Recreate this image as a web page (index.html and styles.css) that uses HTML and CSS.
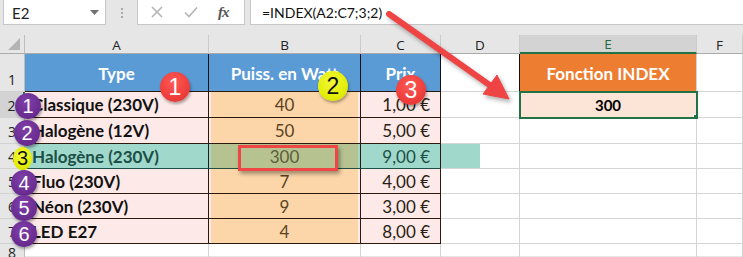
FILE: index.html
```html
<!DOCTYPE html>
<html lang="fr">
<head>
<meta charset="utf-8">
<title>Fonction INDEX</title>
<link rel="stylesheet" href="styles.css">
</head>
<body>
<div class="app">
  <div class="toolbar">
    <div class="namebox"><span>E2</span><svg class="caret" width="9" height="5" viewBox="0 0 9 5"><path d="M0 0h9L4.5 5z"/></svg></div>
    <div class="grip"><i></i><i></i><i></i></div>
    <div class="fxbox">
      <svg class="ico" width="14" height="14" viewBox="0 0 14 14"><path d="M2 2l10 10M12 2L2 12"/></svg>
      <svg class="ico" width="16" height="14" viewBox="0 0 16 14"><path d="M2 7.5l4 4L14 2.5"/></svg>
      <span class="fx">fx</span>
    </div>
    <div class="formula">=INDEX(A2:C7;3;2)</div>
  </div>

  <div class="sheet">
    <div class="corner"><svg width="13" height="13" viewBox="0 0 13 13"><path d="M12 0v12H0z"/></svg></div>
    <div class="ch">A</div><div class="ch">B</div><div class="ch">C</div><div class="ch">D</div><div class="ch sel">E</div><div class="ch">F</div>

    <div class="rh">1</div>
    <div class="c hd">Type</div><div class="c hd">Puiss. en Watt</div><div class="c hd">Prix</div>
    <div class="c d1"></div><div class="c hd-or">Fonction INDEX</div><div class="c"></div>

    <div class="rh rsel">2</div>
    <div class="c ta">Classique (230V)</div><div class="c tb">40</div><div class="c tc">1,00 €</div>
    <div class="c"></div><div class="c res">300</div><div class="c"></div>

    <div class="rh">3</div>
    <div class="c ta">Halogène (12V)</div><div class="c tb">50</div><div class="c tc">5,00 €</div>
    <div class="c"></div><div class="c"></div><div class="c"></div>

    <div class="rh">4</div>
    <div class="c ta hl">Halogène (230V)</div><div class="c tb hlb">300</div><div class="c tc hl">9,00 €</div>
    <div class="c hld"></div><div class="c"></div><div class="c"></div>

    <div class="rh">5</div>
    <div class="c ta">Fluo (230V)</div><div class="c tb">7</div><div class="c tc">4,00 €</div>
    <div class="c"></div><div class="c"></div><div class="c"></div>

    <div class="rh">6</div>
    <div class="c ta">Néon (230V)</div><div class="c tb">9</div><div class="c tc">3,00 €</div>
    <div class="c"></div><div class="c"></div><div class="c"></div>

    <div class="rh">7</div>
    <div class="c ta">LED E27</div><div class="c tb">4</div><div class="c tc">8,00 €</div>
    <div class="c"></div><div class="c"></div><div class="c"></div>

    <div class="rh">8</div>
    <div class="c"></div><div class="c"></div><div class="c"></div>
    <div class="c"></div><div class="c"></div><div class="c"></div>
  </div>

  <div class="redbox"></div>

  <svg class="arrow" width="743" height="257" viewBox="0 0 743 257">
    <line x1="389" y1="14" x2="491" y2="86" />
    <polygon points="483,94 497,75 509,99" />
  </svg>

  <div class="badge red b-r1">1</div>
  <div class="badge yellow b-y2">2</div>
  <div class="badge red b-r3">3</div>

  <div class="badge purple b-p1">1</div>
  <div class="badge purple b-p2">2</div>
  <div class="badge yellow b-y3">3</div>
  <div class="badge purple b-p4">4</div>
  <div class="badge purple b-p5">5</div>
  <div class="badge purple b-p6">6</div>
</div>
</body>
</html>
```

FILE: styles.css
```css
* { box-sizing: border-box; }
html, body { margin: 0; padding: 0; }
body {
  width: 743px;
  height: 257px;
  overflow: hidden;
  background: #e6e6e6;
  font-family: Lato, "Open Sans", sans-serif;
}
.app {
  position: relative;
  width: 743px;
  height: 257px;
  overflow: hidden;
}

/* ---------- formula bar ---------- */
.toolbar {
  display: flex;
  height: 26px;
  margin-top: -1px;
  padding-left: 3px;
}
.namebox {
  width: 103px;
  background: #fff;
  border: 1px solid #c6c6c6;
  display: flex;
  align-items: center;
  justify-content: space-between;
  padding: 1px 6px 0 8px;
  font-family: Lato, sans-serif;
  font-size: 15px;
  color: #222;
}
.caret path { fill: #707070; }
.grip {
  width: 31px;
  display: flex;
  flex-direction: column;
  align-items: center;
  justify-content: center;
  gap: 2px;
  padding-top: 1px;
}
.grip i {
  display: block;
  width: 2px;
  height: 2px;
  background: #a8a8a8;
}
.fxbox {
  width: 108px;
  background: #fff;
  border: 1px solid #c6c6c6;
  display: flex;
  align-items: center;
  padding-left: 12px;
  gap: 19px;
}
.ico path {
  fill: none;
  stroke: #b5b5b5;
  stroke-width: 1.6;
}
.fx {
  font-family: "Liberation Serif", serif;
  font-style: italic;
  font-weight: bold;
  font-size: 15px;
  color: #555;
  letter-spacing: -1px;
}
.formula {
  flex: 1;
  margin-left: 5px;
  background: #fff;
  border: 1px solid #c6c6c6;
  border-right: none;
  display: flex;
  align-items: center;
  padding: 1px 0 0 11px;
  font-family: Lato, sans-serif;
  font-size: 14px;
  color: #111;
}

/* ---------- grid ---------- */
.sheet {
  margin-top: 10px;
  display: grid;
  grid-template-columns: 25px 184px 152px 80px 79px 177px 1fr;
  grid-template-rows: 19px 38px 26px 26px 25px 25px 25px 25px 1fr;
  height: 221px;
  background: #fff;
}
.corner {
  background: #e6e6e6;
  border-right: 1px solid #bdbdbd;
  border-bottom: 1px solid #ababab;
  display: flex;
  align-items: flex-end;
  justify-content: flex-end;
  padding: 0 3px 2px 0;
}
.corner path { fill: #b4b4b4; }
.ch {
  background: #e6e6e6;
  border-right: 1px solid #cbcbcb;
  border-bottom: 1px solid #ababab;
  display: flex;
  align-items: center;
  justify-content: center;
  font-family: "Open Sans", sans-serif;
  font-size: 13.5px;
  color: #222;
  padding-top: 1px;
}
.ch.sel {
  background: #d3d3d3;
  color: #1d6b40;
  border-bottom: 2px solid #217346;
}
.rh {
  background: #e6e6e6;
  border-right: 1px solid #bdbdbd;
  border-bottom: 1px solid #d2d2d2;
  display: flex;
  align-items: flex-end;
  justify-content: center;
  padding-bottom: 2px;
  font-family: "Open Sans", sans-serif;
  font-size: 14px;
  line-height: 18px;
  color: #222;
}
.rh.rsel {
  background: #d3d3d3;
  border-right: 2px solid #217346;
}

.c {
  border-right: 1px solid #d4d4d4;
  border-bottom: 1px solid #d4d4d4;
  display: flex;
  align-items: center;
  font-size: 17px;
  white-space: nowrap;
  overflow: hidden;
}
.hd {
  background: #5b9bd5;
  color: #fff;
  font-weight: bold;
  justify-content: center;
  border-right: 1px solid #111;
  border-bottom: 1px solid #2d1a0e;
  padding-top: 2px;
}
.d1 { border-right: 1px solid #111; }
.hd-or {
  background: #ed7d31;
  color: #fff;
  font-weight: bold;
  justify-content: center;
  border-bottom-color: #ed7d31;
  padding-top: 2px;
}
.ta, .tb, .tc {
  border-right: 1px solid #2d1a0e;
  border-bottom: 1px solid #2d1a0e;
}
.ta {
  background: #fde9e7;
  font-weight: bold;
  color: #111;
  padding-left: 7px;
}
.tb {
  background: #fcd6a8;
  box-shadow: inset 2px 0 #fde9e7, inset -2px 0 #fde9e7;
  justify-content: center;
  color: #5a4325;
}
.tc {
  background: #fde9e7;
  justify-content: flex-end;
  padding-right: 10px;
  color: #2a1d12;
}
.hl {
  background: #a0d9cc;
  color: #1c4f45;
  border-bottom-color: #1f4f45;
}
.hlb {
  background: #b6c390;
  box-shadow: inset 2px 0 #a0d9cc, inset -2px 0 #a0d9cc;
  color: #5c5e38;
  border-bottom-color: #1f4f45;
}
.hld {
  background: linear-gradient(to right, #a0d9cc 0 39px, #fff 39px);
}
.res {
  position: relative;
  background: #fce4d6;
  justify-content: center;
  font-weight: bold;
  font-size: 15px;
  color: #000;
  outline: 2px solid #217346;
  outline-offset: -1px;
  padding-top: 1px;
}
.res::after {
  content: "";
  position: absolute;
  right: -4px;
  bottom: -4px;
  width: 5px;
  height: 5px;
  background: #217346;
  border: 1px solid #fff;
}

/* ---------- annotations ---------- */
.redbox {
  position: absolute;
  left: 238px;
  top: 145px;
  width: 100px;
  height: 26px;
  border: 3px solid #ef4646;
  box-shadow: 2px 3px 4px rgba(0, 0, 0, 0.35);
}
.arrow {
  position: absolute;
  left: 0;
  top: 0;
  filter: drop-shadow(2px 3px 2px rgba(0, 0, 0, 0.3));
}
.arrow line {
  stroke: #ef4444;
  stroke-width: 6;
  stroke-linecap: round;
}
.arrow polygon {
  fill: #ef4444;
  stroke: #ef4444;
  stroke-width: 1;
  stroke-linejoin: round;
}

.badge {
  position: absolute;
  border-radius: 50%;
  display: flex;
  align-items: center;
  justify-content: center;
  font-family: "Liberation Sans", Arial, sans-serif;
  box-shadow: 1px 2px 3px rgba(0, 0, 0, 0.35);
}
.red {
  width: 30px;
  height: 30px;
  background: radial-gradient(circle at 45% 35%, #ff5a55 0%, #ee3e3c 60%, #d8302f 100%);
  color: #fff;
  font-size: 23px;
}
.yellow {
  background: radial-gradient(circle at 45% 35%, #f2f83a 0%, #e3ee06 60%, #cdd600 100%);
  color: #111;
}
.purple {
  width: 26px;
  height: 26px;
  background: radial-gradient(circle at 45% 35%, #8040a8 0%, #6a2c91 65%, #58207c 100%);
  color: #fff;
  font-size: 20px;
}
.b-r1 { left: 160px; top: 72px; }
.b-r3 { left: 396px; top: 75px; }
.b-y2 { left: 318px; top: 71px; width: 30px; height: 30px; font-size: 23px; }
.b-y3 { left: 13px; top: 147px; width: 19px; height: 23px; font-size: 20px; box-shadow: none; }
.b-p1 { left: 15px; top: 93px; }
.b-p2 { left: 14px; top: 120px; }
.b-p4 { left: 11px; top: 170px; }
.b-p5 { left: 11px; top: 195px; }
.b-p6 { left: 11px; top: 221px; }
```
